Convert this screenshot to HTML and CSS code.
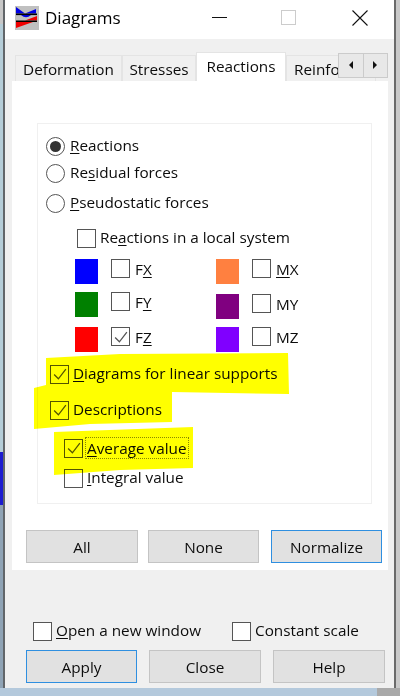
FILE: index.html
```html
<!DOCTYPE html>
<html lang="en">
<head>
<meta charset="utf-8">
<title>Diagrams</title>
<link rel="stylesheet" href="styles.css">
</head>
<body>
<div class="dialog">
  <header class="titlebar">
    <svg class="app-icon" viewBox="0 0 24 24" aria-hidden="true">
      <rect width="24" height="24" fill="#c0c0c0"/>
      <path d="M1 1 L10 7.5 L21 3 V7.5 H1 Z" fill="#0000e6"/>
      <path d="M6 9 Q11 13.5 16 9 Z" fill="#0000e6"/>
      <rect x="1" y="7.5" width="21" height="1.6" fill="#000"/>
      <path d="M10 14.5 L22 10 V14.5 Z" fill="#f00000"/>
      <path d="M1 16 H18 L1 22 Z" fill="#f00000"/>
      <rect x="1" y="14.5" width="21" height="1.5" fill="#000"/>
    </svg>
    <span class="title">Diagrams</span>
    <span class="win-min"></span>
    <span class="win-max"></span>
    <svg class="win-close" viewBox="0 0 16 16" aria-hidden="true"><path d="M0.5 0.5 L15.5 15.5 M15.5 0.5 L0.5 15.5" stroke="#111" stroke-width="1.1" fill="none"/></svg>
  </header>

  <nav class="tabs">
    <span class="tab tab-def">Deformation</span>
    <span class="tab tab-str">Stresses</span>
    <span class="tab tab-active">Reactions</span>
    <span class="tab tab-rei">Reinfo</span>
    <div class="tab-arrows">
      <span class="arrow"><i class="tri tri-left"></i></span>
      <span class="arrow"><i class="tri tri-right"></i></span>
    </div>
  </nav>

  <main class="pane">
    <section class="group">
      <label class="row r1"><span class="radio on"></span><span class="lbl"><u>R</u>eactions</span></label>
      <label class="row r2"><span class="radio"></span><span class="lbl">Re<u>s</u>idual forces</span></label>
      <label class="row r3"><span class="radio"></span><span class="lbl"><u>P</u>seudostatic forces</span></label>
      <label class="row r4"><span class="box"></span><span class="lbl lbl-tight">Re<u>a</u>ctions in a local system</span></label>

      <div class="colors c1">
        <div class="pair"><span class="swatch s-blue"></span><span class="box"></span><span class="lbl lbl-f">F<u>X</u></span></div>
        <div class="pair"><span class="swatch s-orange"></span><span class="box"></span><span class="lbl lbl-f"><u>M</u>X</span></div>
      </div>
      <div class="colors c2">
        <div class="pair"><span class="swatch s-green"></span><span class="box"></span><span class="lbl lbl-f">F<u>Y</u></span></div>
        <div class="pair low"><span class="swatch s-purple"></span><span class="box"></span><span class="lbl lbl-f">MY</span></div>
      </div>
      <div class="colors c3">
        <div class="pair"><span class="swatch s-red"></span><span class="box"><svg class="tick" viewBox="0 0 15 15" aria-hidden="true"><path d="M2 8 L6 12 L13 3" fill="none" stroke="#555" stroke-width="1.2"/></svg></span><span class="lbl lbl-f">F<u>Z</u></span></div>
        <div class="pair"><span class="swatch s-violet"></span><span class="box"></span><span class="lbl lbl-f">MZ</span></div>
      </div>

      <label class="row r5"><span class="box"><svg class="tick" viewBox="0 0 15 15" aria-hidden="true"><path d="M2 8 L6 12 L13 3" fill="none" stroke="#555" stroke-width="1.2"/></svg></span><span class="lbl lbl-tight"><u>D</u>iagrams for linear supports</span></label>
      <label class="row r6"><span class="box"><svg class="tick" viewBox="0 0 15 15" aria-hidden="true"><path d="M2 8 L6 12 L13 3" fill="none" stroke="#555" stroke-width="1.2"/></svg></span><span class="lbl lbl-tight">Descriptions</span></label>
      <label class="row r7"><span class="box"><svg class="tick" viewBox="0 0 15 15" aria-hidden="true"><path d="M2 8 L6 12 L13 3" fill="none" stroke="#555" stroke-width="1.2"/></svg></span><span class="lbl lbl-focus"><u>A</u>verage value</span></label>
      <label class="row r8"><span class="box"></span><span class="lbl lbl-tight"><u>I</u>ntegral value</span></label>
    </section>

    <div class="pane-buttons">
      <button class="btn btn-a">All</button>
      <button class="btn btn-b">None</button>
      <button class="btn btn-c btn-focus">Normalize</button>
    </div>
  </main>

  <div class="bottom-checks">
    <label class="bcheck b1"><span class="box"></span><span class="lbl lbl-tight"><u>O</u>pen a new window</span></label>
    <label class="bcheck b2"><span class="box"></span><span class="lbl lbl-tight">Constant scale</span></label>
  </div>

  <footer class="dialog-buttons">
    <button class="btn btn-d btn-focus">Apply</button>
    <button class="btn btn-e">Close</button>
    <button class="btn btn-f">Help</button>
  </footer>

  <svg class="marker" viewBox="0 0 389 696" aria-hidden="true">
    <path d="M41 358 L115 354 L283 353 L284 394 L167 392 L167 422 L85 424 L29 429 L29 388 L41 385 Z" fill="#ffff00"/>
    <path d="M49 432 L188 427 L188 468 L115 470 L49 475 Z" fill="#ffff00"/>
  </svg>
</div>
</body>
</html>
```
FILE: styles.css
```css
* { box-sizing: border-box; }
html, body { margin: 0; padding: 0; }
body {
  width: 400px;
  height: 696px;
  overflow: hidden;
  font-family: "Open Sans", "Liberation Sans", sans-serif;
  font-size: 15.3px;
  color: #0c0c0c;
  background:
    linear-gradient(#1c1cd0, #1c1cd0) 0 452px / 5px 53px no-repeat,
    linear-gradient(#c8c8c8, #c8c8c8) 0 0 / 5px 24px no-repeat,
    linear-gradient(#8fa3b5, #8fa3b5) 0 505px / 5px 183px no-repeat,
    linear-gradient(#a9a9a9, #a9a9a9) 377px 688px / 23px 8px no-repeat,
    linear-gradient(#b4c9dc, #b4c9dc) 0 688px / 377px 8px no-repeat,
    linear-gradient(#c9c9c9, #c9c9c9) 396px 0 / 4px 696px no-repeat,
    #b5cdd8;
}
.dialog {
  position: relative;
  width: 393px;
  height: 688px;
  margin-left: 3px;
  background: #f0f0f0;
  border-left: 2px solid #62666a;
  border-right: 2px solid #6a6a6a;
  display: flex;
  flex-direction: column;
}
.titlebar {
  height: 39px;
  flex: none;
  background: #fff;
  display: flex;
  align-items: center;
  padding-left: 10px;
}
.app-icon { width: 24px; height: 24px; margin-top: -4px; flex: none; }
.title { margin-left: 6px; margin-top: -4px; font-size: 17px; color: #000; width: 167px; flex: none; }
.win-min { width: 15px; height: 1.5px; background: #111; margin-top: -4px; flex: none; }
.win-max { width: 15px; height: 15px; border: 1px solid #ccc; margin-left: 54px; margin-top: -4px; flex: none; }
.win-close { width: 16px; height: 16px; margin-left: 56px; margin-top: -4px; flex: none; }

.tabs {
  position: relative;
  height: 42px;
  flex: none;
  display: flex;
  align-items: flex-end;
  padding-left: 10px;
  overflow: hidden;
}
.tab {
  height: 26px;
  flex: none;
  background: #f0f0f0;
  border: 1px solid #e4e4e4;
  border-bottom: 0;
  display: flex;
  align-items: center;
  justify-content: center;
}
.tab-def { width: 107px; }
.tab-str { width: 74px; }
.tab-active {
  width: 90px;
  height: 29px;
  background: #fff;
  padding-bottom: 2px;
}
.tab-rei { width: 90px; justify-content: flex-start; padding-left: 7px; white-space: nowrap; }
.tab-arrows {
  position: absolute;
  left: 333px;
  top: 14px;
  width: 50px;
  height: 25px;
  display: flex;
  background: #e8e8e8;
  border: 1px solid #cbcbcb;
}
.arrow { flex: 1; display: flex; align-items: center; justify-content: center; }
.arrow + .arrow { border-left: 1px solid #cbcbcb; }
.tri { width: 0; height: 0; border-top: 4px solid transparent; border-bottom: 4px solid transparent; margin-top: -1px; }
.tri-left { border-right: 4px solid #111; }
.tri-right { border-left: 4px solid #111; }

.pane {
  margin-left: 7px;
  width: 376px;
  height: 489px;
  flex: none;
  background: #fff;
  padding: 42px 0 0 25px;
}
.group {
  width: 335px;
  height: 381px;
  border: 1px solid #f0f0f0;
  display: flex;
  flex-direction: column;
}
.row { height: 26px; display: flex; align-items: center; flex: none; }
.r1 { margin-top: 9px; padding-left: 8px; }
.r2 { margin-top: 1px; padding-left: 8px; }
.r3 { margin-top: 4px; padding-left: 8px; }
.r4 { margin-top: 9px; padding-left: 39px; }
.r5 { margin-top: 9px; padding-left: 12px; }
.r6 { margin-top: 10px; padding-left: 12px; }
.r7 { margin-top: 12px; padding-left: 26px; }
.r8 { margin-top: 4px; padding-left: 26px; }

.radio {
  width: 19px;
  height: 19px;
  flex: none;
  border: 1.5px solid #555;
  border-radius: 50%;
  background: #fff;
  display: flex;
  align-items: center;
  justify-content: center;
}
.radio.on::after {
  content: "";
  width: 11px;
  height: 11px;
  border-radius: 50%;
  background: #333;
}
.box {
  width: 19px;
  height: 19px;
  flex: none;
  border: 1.5px solid #555;
  background: #fff;
  display: flex;
  align-items: center;
  justify-content: center;
}
.tick { width: 16px; height: 16px; display: block; }
.lbl { margin-left: 5px; white-space: nowrap; position: relative; top: -1px; }
.lbl-tight { margin-left: 4px; }
.lbl-f { margin-left: 5px; top: 0; }
.lbl-focus { margin-left: 3px; padding: 0 1px; outline: 1px dotted #888; line-height: 20px; top: 0; }
u { text-underline-offset: 2px; text-decoration-thickness: 1px; }

.colors { display: flex; padding-left: 37px; flex: none; height: 25px; }
.c1 { margin-top: 8px; }
.c2 { margin-top: 8px; }
.c3 { margin-top: 10px; }
.pair { width: 141px; display: flex; align-items: flex-start; }
.low { margin-top: 2px; }
.pair .lbl { line-height: 20px; }
.swatch { width: 23px; height: 25px; flex: none; margin-right: 13px; }
.s-blue { background: #0000ff; }
.s-green { background: #008000; }
.s-red { background: #ff0000; }
.s-orange { background: #ff8040; }
.s-purple { background: #800080; }
.s-violet { background: #8000ff; }

.btn {
  height: 33px;
  font: inherit;
  color: #0c0c0c;
  background: #e1e1e1;
  border: 1.5px solid #c4c4c4;
  padding: 0;
  flex: none;
}
.btn-focus { border: 1.5px solid #2f8fe0; }
.pane-buttons { display: flex; margin: 26px 0 0 -11px; }
.btn-a { width: 112px; }
.btn-b { width: 111px; margin-left: 10px; }
.btn-c { width: 111px; margin-left: 12px; }

.bottom-checks { display: flex; margin-top: 48px; height: 26px; align-items: center; flex: none; }
.b1 { display: flex; align-items: center; margin-left: 28px; width: 199px; }
.b2 { display: flex; align-items: center; }
.dialog-buttons { display: flex; margin: 6px 0 0 21px; }
.btn-d { width: 111px; }
.btn-e { width: 112px; margin-left: 12px; }
.btn-f { width: 112px; margin-left: 12px; }

.marker {
  position: absolute;
  left: 0;
  top: 0;
  width: 389px;
  height: 696px;
  mix-blend-mode: multiply;
  pointer-events: none;
}
```
